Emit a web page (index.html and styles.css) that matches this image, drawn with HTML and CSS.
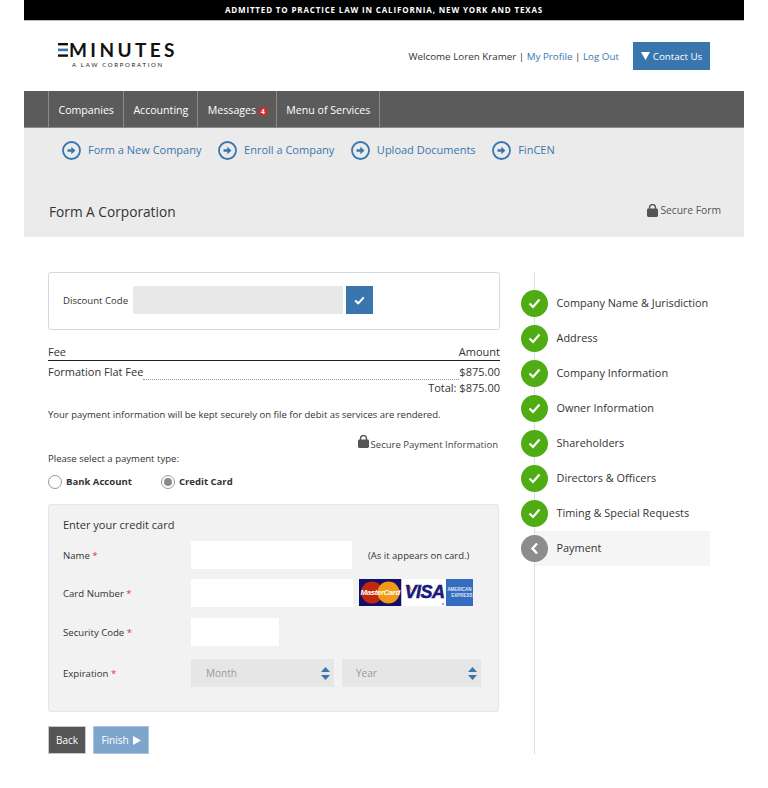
FILE: index.html
```html
<!DOCTYPE html>
<html lang="en">
<head>
<meta charset="utf-8">
<title>Form A Corporation</title>
<link rel="stylesheet" href="styles.css">
</head>
<body>
<div class="page">
  <div class="topbar">ADMITTED TO PRACTICE LAW IN CALIFORNIA, NEW YORK AND TEXAS</div>
  <header class="header">
    <div class="logo">
      <div class="logo-main">
        <svg class="logo-e" width="10" height="14" viewBox="0 0 10 14"><rect width="10" height="2.4" fill="#111"/><rect y="5.6" width="10" height="2.6" fill="#3a76ae"/><rect y="11.4" width="10" height="2.4" fill="#111"/></svg>
        <span class="logo-word">MINUTES</span>
      </div>
      <div class="logo-sub">A LAW CORPORATION</div>
    </div>
    <div class="account">
      <span>Welcome Loren Kramer | <a class="link" href="#">My Profile</a> | <a class="link" href="#">Log Out</a></span>
      <a class="contact" href="#"><svg width="9" height="8" viewBox="0 0 9 8"><path d="M0 0h9L4.500 8z" fill="#fff"/></svg>Contact Us</a>
    </div>
  </header>
  <nav class="nav">
    <a class="nav-item" href="#">Companies</a>
    <a class="nav-item" href="#">Accounting</a>
    <a class="nav-item" href="#">Messages <span class="badge">4</span></a>
    <a class="nav-item" href="#">Menu of Services</a>
  </nav>
  <section class="band">
    <div class="subnav">
      <a class="sub-item" href="#"><svg class="sub-icon" viewBox="0 0 19 19"><circle cx="9.500" cy="9.500" r="8.500" fill="none" stroke="#3a76ae" stroke-width="1.800"/><path d="M5.500 8.300h3.800V5.800l4.200 3.700-4.200 3.700v-2.500H5.500z" fill="#3a76ae"/></svg>Form a New Company</a>
      <a class="sub-item" href="#"><svg class="sub-icon" viewBox="0 0 19 19"><circle cx="9.500" cy="9.500" r="8.500" fill="none" stroke="#3a76ae" stroke-width="1.800"/><path d="M5.500 8.300h3.800V5.800l4.200 3.700-4.200 3.700v-2.500H5.500z" fill="#3a76ae"/></svg>Enroll a Company</a>
      <a class="sub-item" href="#"><svg class="sub-icon" viewBox="0 0 19 19"><circle cx="9.500" cy="9.500" r="8.500" fill="none" stroke="#3a76ae" stroke-width="1.800"/><path d="M5.500 8.300h3.800V5.800l4.200 3.700-4.200 3.700v-2.500H5.500z" fill="#3a76ae"/></svg>Upload Documents</a>
      <a class="sub-item" href="#"><svg class="sub-icon" viewBox="0 0 19 19"><circle cx="9.500" cy="9.500" r="8.500" fill="none" stroke="#3a76ae" stroke-width="1.800"/><path d="M5.500 8.300h3.800V5.800l4.200 3.700-4.200 3.700v-2.500H5.500z" fill="#3a76ae"/></svg>FinCEN</a>
    </div>
    <div class="title-row">
      <h1 class="title">Form A Corporation</h1>
      <div class="secure"><svg width="11" height="13" viewBox="0 0 11 13"><path d="M2.500 5V3.500a3 3 0 0 1 6 0V5" fill="none" stroke="#555" stroke-width="1.400"/><rect y="4.600" width="11" height="8.400" rx="1.400" fill="#555"/></svg>Secure Form</div>
    </div>
  </section>
  <main class="main">
    <div class="content">
      <div class="discount">
        <span class="discount-label">Discount Code</span>
        <div class="discount-input"></div>
        <button class="discount-btn" type="button"><svg width="11" height="9" viewBox="0 0 11 9"><path d="M1.200 4.600l3 2.800 5.600-6" fill="none" stroke="#fff" stroke-width="2"/></svg></button>
      </div>
      <div class="fee-head"><span>Fee</span><span>Amount</span></div>
      <div class="fee-row"><span>Formation Flat Fee</span><span class="dots"></span><span>$875.00</span></div>
      <div class="fee-total">Total: $875.00</div>
      <p class="note">Your payment information will be kept securely on file for debit as services are rendered.</p>
      <div class="secure-pay"><svg class="secure-pay-lock" width="11" height="13" viewBox="0 0 11 13"><path d="M2.500 5V3.500a3 3 0 0 1 6 0V5" fill="none" stroke="#555" stroke-width="1.400"/><rect y="4.600" width="11" height="8.400" rx="1.400" fill="#555"/></svg>Secure Payment Information</div>
      <div class="pay-prompt">Please select a payment type:</div>
      <div class="pay-types">
        <span class="radio-item"><span class="radio"></span>Bank Account</span>
        <span class="radio-item"><span class="radio radio-on"></span>Credit Card</span>
      </div>
      <div class="panel">
        <div class="panel-title">Enter your credit card</div>
        <div class="form-row row-name">
          <span class="form-label">Name <em>*</em></span>
          <div class="field field-name"></div>
          <span class="hint">(As it appears on card.)</span>
        </div>
        <div class="form-row row-card">
          <span class="form-label">Card Number <em>*</em></span>
          <div class="field field-card"></div>
          <svg class="cards" width="114" height="27" viewBox="0 0 114 27">
            <rect width="42.500" height="27" fill="#12106a"/>
            <circle cx="13" cy="13.500" r="11" fill="#c3280f"/>
            <circle cx="29.500" cy="13.500" r="11" fill="#f09a16"/>
            <text x="21.250" y="16.300" text-anchor="middle" class="mc-text">MasterCard</text>
            <rect x="42.500" width="44" height="27" fill="#fff"/>
            <path d="M44.500 6.200h6.500l2.800 7.500c-1.800-3.500-5.300-6.200-9.300-7.500z" fill="#f0a520"/>
            <text x="65.500" y="19.300" text-anchor="middle" class="visa-text">VISA</text>
            <circle cx="84" cy="25" r="1" fill="#5b8fd0"/>
            <rect x="87" width="27" height="27" fill="#366cc0"/>
            <text x="100.500" y="12.300" text-anchor="middle" class="amex-text">AMERICAN</text>
            <text x="103" y="17.800" text-anchor="middle" class="amex-text">EXPRESS</text>
          </svg>
        </div>
        <div class="form-row row-code">
          <span class="form-label">Security Code <em>*</em></span>
          <div class="field field-code"></div>
        </div>
        <div class="form-row row-exp">
          <span class="form-label">Expiration <em>*</em></span>
          <div class="select select-month">Month<svg width="9" height="13" viewBox="0 0 9 13"><path d="M4.500 0L9 5H0zM4.500 13L0 8h9z" fill="#3a76ae"/></svg></div>
          <div class="select select-year">Year<svg width="9" height="13" viewBox="0 0 9 13"><path d="M4.500 0L9 5H0zM4.500 13L0 8h9z" fill="#3a76ae"/></svg></div>
        </div>
      </div>
      <div class="actions">
        <button class="btn btn-back" type="button">Back</button>
        <button class="btn btn-finish" type="button">Finish<svg width="8" height="9" viewBox="0 0 8 9"><path d="M0 0l8 4.500L0 9z" fill="#fff"/></svg></button>
      </div>
    </div>
    <aside class="steps">
      <div class="step"><span class="dot"><svg width="13" height="11" viewBox="0 0 13 11"><path d="M1.500 5.500l3.500 3.500 6.500-7.500" fill="none" stroke="#fff" stroke-width="2.200"/></svg></span>Company Name &amp; Jurisdiction</div>
      <div class="step"><span class="dot"><svg width="13" height="11" viewBox="0 0 13 11"><path d="M1.500 5.500l3.500 3.500 6.500-7.500" fill="none" stroke="#fff" stroke-width="2.200"/></svg></span>Address</div>
      <div class="step"><span class="dot"><svg width="13" height="11" viewBox="0 0 13 11"><path d="M1.500 5.500l3.500 3.500 6.500-7.500" fill="none" stroke="#fff" stroke-width="2.200"/></svg></span>Company Information</div>
      <div class="step"><span class="dot"><svg width="13" height="11" viewBox="0 0 13 11"><path d="M1.500 5.500l3.500 3.500 6.500-7.500" fill="none" stroke="#fff" stroke-width="2.200"/></svg></span>Owner Information</div>
      <div class="step"><span class="dot"><svg width="13" height="11" viewBox="0 0 13 11"><path d="M1.500 5.500l3.500 3.500 6.500-7.500" fill="none" stroke="#fff" stroke-width="2.200"/></svg></span>Shareholders</div>
      <div class="step"><span class="dot"><svg width="13" height="11" viewBox="0 0 13 11"><path d="M1.500 5.500l3.500 3.500 6.500-7.500" fill="none" stroke="#fff" stroke-width="2.200"/></svg></span>Directors &amp; Officers</div>
      <div class="step"><span class="dot"><svg width="13" height="11" viewBox="0 0 13 11"><path d="M1.500 5.500l3.500 3.500 6.500-7.500" fill="none" stroke="#fff" stroke-width="2.200"/></svg></span>Timing &amp; Special Requests</div>
      <div class="step step-current"><span class="dot dot-current"><svg width="9" height="13" viewBox="0 0 9 13"><path d="M7 1.500L2.500 6.500 7 11.500" fill="none" stroke="#fff" stroke-width="2.400"/></svg></span>Payment</div>
    </aside>
  </main>
</div>
</body>
</html>
```
FILE: styles.css
```css
* { box-sizing: border-box; }
html, body { margin: 0; padding: 0; background: #fff; }
body { font-family: "Open Sans", "Liberation Sans", sans-serif; font-size: 10px; color: #333; }
a { text-decoration: none; }
.page { width: 720px; margin-left: 24px; height: 788px; overflow: hidden; }
.link { color: #3a76ae; }

.topbar { height: 21px; background: #000; color: #fff; font-size: 8px; font-weight: 700; letter-spacing: 0.84px; line-height: 20px; text-align: center; border-bottom: 1px solid #bbb; }

.header { height: 70px; display: flex; justify-content: space-between; align-items: flex-start; padding: 20px 34px 0 34px; }
.logo-main { display: flex; align-items: center; gap: 1px; height: 18px; }
.logo-word { font-family: "Lato", sans-serif; font-size: 19px; font-weight: 700; letter-spacing: 3.4px; color: #111; line-height: 18px; }
.logo-sub { font-family: "Lato", sans-serif; font-size: 6px; letter-spacing: 1.7px; color: #222; text-align: center; line-height: 8px; margin-top: 2px; }
.account { display: flex; align-items: center; gap: 14px; font-size: 9.8px; color: #333; height: 28px; margin-top: 1px; }
.contact { width: 77px; height: 28px; background: #3a76ae; color: #fff; display: flex; align-items: center; justify-content: center; gap: 3px; }

.nav { height: 37px; background: #5b5b5b; border-bottom: 1px solid #8a8a8a; padding-left: 24px; display: flex; }
.nav-item { color: #fff; font-size: 10.6px; height: 36px; line-height: 38px; padding: 0 9px 0 9.5px; border-left: 1px solid #8a8a8a; }
.nav-item:last-child { border-right: 1px solid #8a8a8a; }
.badge { display: inline-block; width: 8px; height: 9px; line-height: 9px; background: #c9302c; border-radius: 2px; color: #fff; font-size: 6.5px; font-weight: 700; text-align: center; }

.band { height: 109px; background: #ebebeb; }
.subnav { display: flex; gap: 16.6px; padding: 13px 0 0 38px; height: 73px; }
.sub-item { display: flex; align-items: center; gap: 7px; height: 19px; padding-bottom: 2px; color: #3a76ae; font-size: 11px; }
.sub-icon { width: 19px; height: 19px; flex: none; margin-bottom: -2px; }
.title-row { display: flex; justify-content: space-between; padding: 0 23px 0 25px; }
.title { font-size: 13.7px; font-weight: 400; color: #333; margin: 0; line-height: 22px; }
.secure { display: flex; align-items: center; gap: 2px; font-size: 10.3px; color: #555; height: 18px; }

.main { display: flex; padding: 35px 0 0 24px; }
.content { width: 452px; }
.discount { height: 58px; width: 452px; border: 1px solid #d8d8d8; border-radius: 3px; display: flex; align-items: center; padding: 0 0 2px 14px; }
.discount-label { width: 70px; font-size: 9.6px; white-space: nowrap; }
.discount-input { width: 210px; height: 28px; background: #e8e8e8; }
.discount-btn { width: 27px; height: 28px; margin-left: 3px; border: 0; padding: 0; background: #3a76ae; display: flex; align-items: center; justify-content: center; }

.fee-head { display: flex; justify-content: space-between; margin-top: 13px; height: 18px; font-size: 11px; line-height: 18px; border-bottom: 1px solid #222; color: #333; }
.fee-row { display: flex; font-size: 11px; height: 19px; line-height: 22px; }
.dots { flex: 1; border-bottom: 1px dotted #999; height: 19px; }
.fee-total { font-size: 11px; text-align: right; line-height: 15px; height: 15px; }
.note { margin: 0; padding-top: 12px; line-height: 15px; font-size: 9.5px; color: #333; }
.secure-pay { display: flex; justify-content: flex-end; align-items: flex-end; gap: 2px; padding: 12px 2px 0 0; font-size: 9.55px; height: 29px; line-height: 13px; color: #444; }
.secure-pay-lock { margin-bottom: 3px; }
.pay-prompt { font-size: 9.55px; line-height: 15px; }
.pay-types { display: flex; gap: 29px; margin-top: 8px; height: 15px; align-items: center; font-size: 9.55px; font-weight: 700; color: #333; }
.radio-item { display: flex; align-items: center; gap: 4px; }
.radio { width: 14px; height: 14px; border: 1px solid #999; border-radius: 50%; background: #fff; }
.radio-on { display: flex; align-items: center; justify-content: center; }
.radio-on::after { content: ""; width: 8px; height: 8px; border-radius: 50%; background: #8a8a8a; }

.panel { width: 451px; height: 208px; margin-top: 15px; background: #f2f2f2; border: 1px solid #e6e6e6; border-radius: 3px; padding: 0 14px; }
.panel-title { font-size: 11px; line-height: 15px; padding-top: 12px; height: 36px; color: #333; }
.form-row { display: flex; align-items: center; }
.form-label { width: 128px; font-size: 9.6px; color: #333; flex: none; }
.form-label em { color: #d9342b; font-style: normal; }
.field { background: #fff; height: 28px; }
.field-name { width: 161px; }
.field-card { width: 162px; }
.field-code { width: 88px; }
.hint { margin-left: 16px; font-size: 9.5px; color: #333; }
.row-card { margin-top: 10px; }
.row-code { margin-top: 11px; }
.row-exp { margin-top: 13px; }
.cards { margin-left: 6px; margin-bottom: 1px; }
.mc-text { font-family: "Liberation Sans", sans-serif; font-size: 7.8px; font-weight: 700; font-style: italic; fill: #fff; letter-spacing: -0.35px; }
.visa-text { font-family: "Liberation Sans", sans-serif; font-size: 18px; font-weight: 700; font-style: italic; fill: #1a1a7e; stroke: #1a1a7e; stroke-width: 0.5px; letter-spacing: -0.6px; }
.amex-text { font-family: "Liberation Sans", sans-serif; font-size: 4.500px; fill: #dfe8f7; font-weight: 700; }
.select { height: 28px; background: #e6e6e6; color: #999; font-size: 10px; display: flex; align-items: center; justify-content: space-between; padding: 0 4px 0 15px; }
.select-month { width: 143px; }
.select-year { width: 139px; margin-left: 8px; padding-left: 14px; }

.actions { display: flex; gap: 7px; margin-top: 14px; }
.btn { height: 28px; border: 1px solid #c8c8c8; color: #fff; font-family: inherit; font-size: 10px; padding: 0; display: flex; align-items: center; justify-content: center; gap: 4px; }
.btn-back { width: 38px; background: #555; }
.btn-finish { width: 56px; background: #7ea6cd; border-color: #a8c4df; }

.steps { width: 176px; margin-left: 34px; height: 482px; border-left: 1px solid #ddd; padding-top: 14px; }
.step { height: 35px; display: flex; align-items: center; gap: 8.5px; padding-bottom: 2px; font-size: 10.9px; color: #333; white-space: nowrap; }
.step-current { background: #f5f5f5; }
.dot { width: 27px; height: 27px; margin: 0 0 -2px -14px; border-radius: 50%; background: #4fad13; display: flex; align-items: center; justify-content: center; flex: none; }
.dot-current { background: #8c8c8c; }
```
